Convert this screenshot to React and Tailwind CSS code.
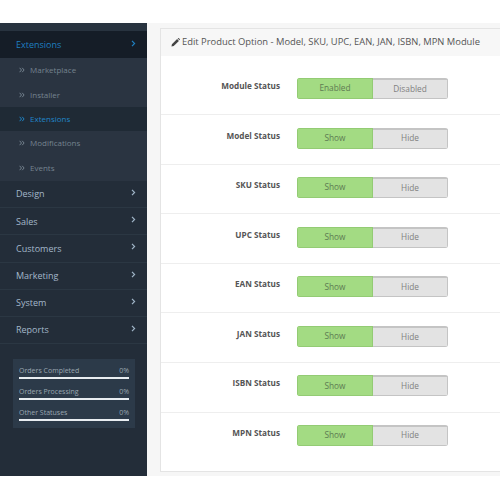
import React from "react";

const font = { fontFamily: '"Open Sans", sans-serif' };

function Chevron({ color = "#9fb4c7" }) {
  return (
    <svg width="5" height="7" viewBox="0 0 5 7" fill="none" className="mr-[11px] mt-[-3px]">
      <path d="M1 0.8L3.6 3.5L1 6.2" stroke={color} strokeWidth="1.2" />
    </svg>
  );
}

function Dbl({ color }) {
  return (
    <svg width="6" height="6" viewBox="0 0 6 6" fill="none">
      <path d="M0.6 0.8L2.5 3L0.6 5.2M3.2 0.8L5.1 3L3.2 5.2" stroke={color} strokeWidth="1" />
    </svg>
  );
}

function SubItem({ label, active }) {
  return (
    <div className={`h-[24.4px] flex items-center pl-[19px] gap-[5px] text-[8px] ${active ? "bg-[#1f2a35] text-[#1f85c7]" : "text-[#75838f]"}`}>
      <Dbl color={active ? "#1f85c7" : "#75838f"} />
      <span>{label}</span>
    </div>
  );
}

function MenuItem({ label }) {
  return (
    <div className="h-[27.2px] flex items-center justify-between pl-[16px] text-[9px] text-[#a3b8ca] border-b border-[#2b3743]">
      <span>{label}</span>
      <Chevron />
    </div>
  );
}

function Stat({ label }) {
  return (
    <div className="h-[21px]">
      <div className="flex justify-between text-[7px] leading-[10px] text-[#9aa6b0] pt-[5px]">
        <span>{label}</span>
        <span>0%</span>
      </div>
      <div className="h-[2px] bg-[#e8edf1] mt-[1px]" />
    </div>
  );
}

function Toggle({ on, off }) {
  return (
    <div className="flex w-[151px] h-[21px] rounded-[3px] text-[8.3px] overflow-hidden">
      <div className="w-[76px] flex items-center justify-center bg-[#a3db83] text-[#5d7a52] border border-[#93cb74]">{on}</div>
      <div className="flex-1 flex items-center justify-center bg-[#e3e3e3] text-[#808080] border-t-2 border-r border-b border-[#c4c4c4]">{off}</div>
    </div>
  );
}

function Row({ label, on = "Show", off = "Hide", last, cls }) {
  return (
    <div className={`flex items-start ${cls} ${last ? "" : "border-b border-[#eeeeee]"}`}>
      <div className="w-[119px] text-right text-[8.2px] font-bold text-[#555555] leading-[12px] pt-[2px]">{label}</div>
      <div className="ml-[17px]">
        <Toggle on={on} off={off} />
      </div>
    </div>
  );
}

export default function App() {
  const rows = ["Model", "SKU", "UPC", "EAN", "JAN", "ISBN"];
  return (
    <div className="w-[500px] h-[500px] bg-white overflow-hidden pt-[23px]" style={font}>
      <div className="flex h-[453px]">
        <aside className="w-[147px] shrink-0 bg-[#232d39] flex flex-col">
          <div className="h-[8px] bg-[#28333f]" />
          <div className="h-[27px] bg-[#151d27] flex items-center justify-between pl-[16px] text-[9px] text-[#1f7fc0]">
            <span>Extensions</span>
            <Chevron color="#1f7fc0" />
          </div>
          <div className="bg-[#2a3441] h-[123px]">
            <SubItem label="Marketplace" />
            <SubItem label="Installer" />
            <SubItem label="Extensions" active />
            <SubItem label="Modifications" />
            <SubItem label="Events" />
          </div>
          <MenuItem label="Design" />
          <MenuItem label="Sales" />
          <MenuItem label="Customers" />
          <MenuItem label="Marketing" />
          <MenuItem label="System" />
          <MenuItem label="Reports" />
          <div className="ml-[13px] mr-[12px] mt-[15px] h-[69px] bg-[#2c3a49] px-[6px] pt-[2px]">
            <Stat label="Orders Completed" />
            <Stat label="Orders Processing" />
            <Stat label="Other Statuses" />
          </div>
        </aside>
        <main className="flex-1 min-w-0 bg-[#f6f6f6] pl-[13px] pt-[5px]">
          <div className="h-[444px] bg-white border-l border-b border-t border-[#e4e4e4]">
            <div className="h-[27px] bg-[#f7f7f7] flex items-center pl-[10px] gap-[2px] text-[9.4px] text-[#555555] whitespace-nowrap">
              <svg width="9" height="9" viewBox="0 0 10 10" fill="#444444">
                <path d="M0.5 9.5L1 7L6.8 1.2L8.8 3.2L3 9L0.5 9.5ZM7.4 0.6L8 0.2Q8.4 0 8.8 0.3L9.7 1.2Q10 1.6 9.8 2L9.4 2.6L7.4 0.6Z" />
              </svg>
              <span>Edit Product Option - Model, SKU, UPC, EAN, JAN, ISBN, MPN Module</span>
            </div>
            <Row label="Module Status" on="Enabled" off="Disabled" cls="h-[59px] pt-[22px]" />
            {rows.map((r) => (
              <Row key={r} label={`${r} Status`} cls="h-[49.6px] pt-[12.5px]" />
            ))}
            <Row label="MPN Status" last cls="h-[59px] pt-[12px]" />
          </div>
        </main>
      </div>
    </div>
  );
}
